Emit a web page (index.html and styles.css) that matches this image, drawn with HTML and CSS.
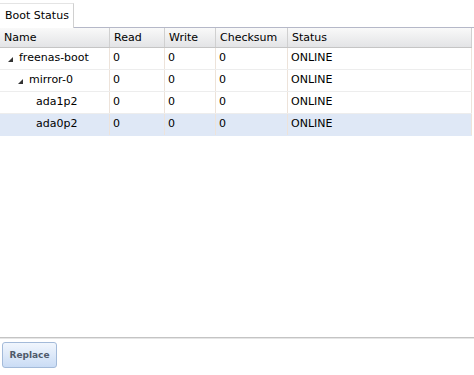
FILE: index.html
```html
<!DOCTYPE html>
<html>
<head>
<meta charset="utf-8">
<link rel="stylesheet" href="styles.css">
</head>
<body>
<div class="panel">
  <div class="tabbar">
    <div class="tab">Boot Status</div>
  </div>
  <div class="grid">
    <div class="row head">
      <div class="cell c1">Name</div>
      <div class="cell c2">Read</div>
      <div class="cell c3">Write</div>
      <div class="cell c4">Checksum</div>
      <div class="cell c5">Status</div>
    </div>
    <div class="row">
      <div class="cell c1 lvl0"><svg class="arr" width="5" height="5" viewBox="0 0 5 5"><polygon points="5,0 5,5 0,5"/></svg>freenas-boot</div>
      <div class="cell c2">0</div>
      <div class="cell c3">0</div>
      <div class="cell c4">0</div>
      <div class="cell c5">ONLINE</div>
    </div>
    <div class="row">
      <div class="cell c1 lvl1"><svg class="arr" width="5" height="5" viewBox="0 0 5 5"><polygon points="5,0 5,5 0,5"/></svg>mirror-0</div>
      <div class="cell c2">0</div>
      <div class="cell c3">0</div>
      <div class="cell c4">0</div>
      <div class="cell c5">ONLINE</div>
    </div>
    <div class="row">
      <div class="cell c1 lvl2">ada1p2</div>
      <div class="cell c2">0</div>
      <div class="cell c3">0</div>
      <div class="cell c4">0</div>
      <div class="cell c5">ONLINE</div>
    </div>
    <div class="row sel">
      <div class="cell c1 lvl2">ada0p2</div>
      <div class="cell c2">0</div>
      <div class="cell c3">0</div>
      <div class="cell c4">0</div>
      <div class="cell c5">ONLINE</div>
    </div>
  </div>
  <div class="toolbar">
    <button class="btn">Replace</button>
  </div>
</div>
</body>
</html>
```

FILE: styles.css
```css
html, body {
  margin: 0;
  padding: 0;
  background: #ffffff;
}
body {
  font-family: "DejaVu Sans", Verdana, sans-serif;
  font-size: 11px;
  color: #000;
}
.panel {
  width: 474px;
  height: 375px;
  display: flex;
  flex-direction: column;
}
.tabbar {
  border-bottom: 1px solid #b5b8c8;
  display: flex;
  align-items: flex-end;
  box-sizing: border-box;
  height: 28px;
}
.tab {
  box-sizing: border-box;
  width: 74px;
  height: 25px;
  padding: 5px 0 0 5px;
  border-top: 1px solid #e4e4e4;
  border-right: 1px solid #d0d0d0;
  background: #fff;
  margin-bottom: -1px;
  font-size: 11px;
}
.grid {
  flex: 1;
  width: 472px;
}
.row {
  display: flex;
  height: 22px;
  border-bottom: 1px solid #ededed;
  box-sizing: border-box;
}
.row.head {
  height: 20px;
  background: linear-gradient(#f9f9f9, #e3e4e6);
  border-bottom: 1px solid #c5c5c5;
}
.row.sel {
  background: #dfe8f6;
  border-bottom-color: #dfe8f6;
}
.cell {
  box-sizing: border-box;
  padding: 3px 0 0 3px;
  border-right: 1px solid #ede3da;
  white-space: nowrap;
  display: flex;
  align-items: flex-start;
}
.head .cell {
  padding-top: 3px;
  padding-left: 4px;
  border-right: 1px solid #d0d0d0;
}
.c1 { width: 110px; }
.c2 { width: 55px; }
.c3 { width: 51px; }
.c4 { width: 72px; }
.c5 { width: 184px; }
.lvl0 { padding-left: 8px; }
.lvl1 { padding-left: 18px; }
.lvl2 { padding-left: 36px; }
.arr {
  fill: #333;
  margin: 6px 6px 0 0;
  flex: none;
}
.toolbar {
  height: 38px;
  border-top: 1px solid #c4c4c4;
  box-shadow: inset 0 1px 0 #e6e6e6;
  padding: 4px 0 0 2px;
  box-sizing: border-box;
}
.btn {
  width: 55px;
  height: 26px;
  border: 1px solid #a3bad9;
  border-radius: 3px;
  background: linear-gradient(#f1f6fd, #cadcf5);
  color: #4f5a6a;
  font-family: "DejaVu Sans", Verdana, sans-serif;
  font-weight: bold;
  font-size: 9px;
  padding: 0;
}
```
